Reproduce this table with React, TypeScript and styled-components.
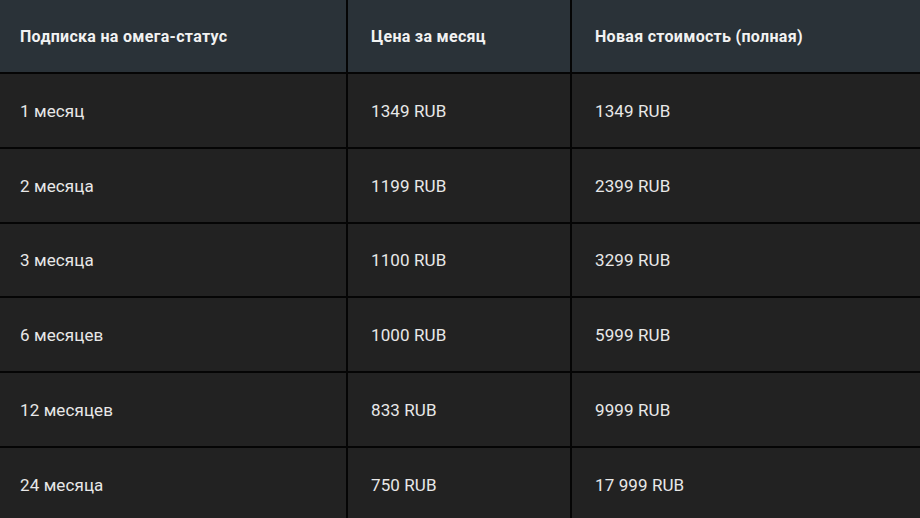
import React from "react"
import styled, { createGlobalStyle } from "styled-components"

const GlobalStyle = createGlobalStyle`
  html, body {
    margin: 0;
    padding: 0;
    background: #222222;
  }
  body {
    font-family: Roboto, "Noto Sans", sans-serif;
    overflow: hidden;
  }
`

const Table = styled.div`
  display: grid;
  grid-template-columns: 346px 222px 1fr;
  grid-auto-rows: 72.75px;
  grid-template-rows: 72px;
  gap: 2px;
  width: 920px;
  background: #050505;
`

const Cell = styled.div<{ $head?: boolean; $first?: boolean }>`
  display: flex;
  align-items: center;
  padding-left: ${(p) => (p.$first ? "20px" : "23px")};
  padding-top: 1px;
  background: ${(p) => (p.$head ? "#2a3238" : "#222222")};
  color: ${(p) => (p.$head ? "#f2f2f2" : "#e8e8e8")};
  font-size: ${(p) => (p.$head ? "16px" : "17px")};
  font-weight: ${(p) => (p.$head ? 700 : 400)};
  letter-spacing: ${(p) => (p.$head ? "0.3px" : "0.1px")};
  white-space: nowrap;
`

const headers = [
  "Подписка на омега-статус",
  "Цена за месяц",
  "Новая стоимость (полная)",
]

const rows = [
  ["1 месяц", "1349 RUB", "1349 RUB"],
  ["2 месяца", "1199 RUB", "2399 RUB"],
  ["3 месяца", "1100 RUB", "3299 RUB"],
  ["6 месяцев", "1000 RUB", "5999 RUB"],
  ["12 месяцев", "833 RUB", "9999 RUB"],
  ["24 месяца", "750 RUB", "17 999 RUB"],
]

export default function App() {
  return (
    <>
      <GlobalStyle />
      <Table>
        {headers.map((h, i) => (
          <Cell key={h} $head $first={i === 0}>
            {h}
          </Cell>
        ))}
        {rows.map((r) =>
          r.map((c, i) => (
            <Cell key={r[0] + i} $first={i === 0}>
              {c}
            </Cell>
          ))
        )}
      </Table>
    </>
  )
}
